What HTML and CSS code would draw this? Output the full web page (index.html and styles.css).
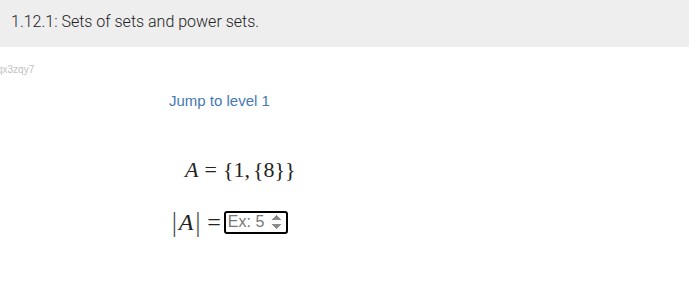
FILE: index.html
```html
<!DOCTYPE html>
<html>
<head>
<meta charset="utf-8">
<link rel="stylesheet" href="styles.css">
</head>
<body>
<header class="title">1.12.1: Sets of sets and power sets.</header>
<div class="activity-id">qx3zqy7</div>
<main class="content">
  <a class="jump" href="#">Jump to level 1</a>
  <div class="math math-set"><span class="var">A</span><span class="rel">=</span>{1,<span class="thin"></span>{8}}</div>
  <div class="math math-answer"><span class="bar">|</span><span class="var">A</span><span class="bar">|</span><span class="rel">=</span><input class="answer" type="number" placeholder="Ex: 5"></div>
</main>
</body>
</html>
```
FILE: styles.css
```css
body {
  margin: 0;
  background: #fff;
  font-family: "Liberation Sans", Arial, sans-serif;
}
.title {
  height: 47px;
  box-sizing: border-box;
  padding: 12px 0 0 11px;
  background: #eeeeee;
  font-family: Roboto, "Liberation Sans", sans-serif;
  font-weight: 300;
  font-size: 16px;
  line-height: 20px;
  color: #222;
}
.activity-id {
  margin: 17px 0 0 -3px;
  font-size: 10px;
  line-height: 12px;
  color: #c2c2c2;
}
.content {
  padding-left: 169px;
}
.jump {
  display: block;
  margin-top: 16px;
  font-size: 15px;
  line-height: 17px;
  color: #4579b3;
  text-decoration: none;
}
.math {
  font-family: "Liberation Serif", "Times New Roman", serif;
  font-size: 22px;
  color: #222;
  display: flex;
  align-items: center;
}
.math-set {
  margin-top: 46px;
  padding-left: 16px;
  height: 30px;
}
.math-answer {
  margin-top: 22px;
  padding-left: 3px;
  height: 30px;
}
.var { font-style: italic; }
.rel { margin: 0 6px 0 6px; }
.thin { display: inline-block; width: 3px; }
.bar { display: inline-block; transform: scaleY(1.2); color: #444; font-size: 24px; }
.bar + .var { margin: 0 2px; font-size: 24px; }
.math-answer .rel { margin: 0 3px 0 7px; font-size: 24px; }
.answer {
  width: 64px;
  height: 23px;
  box-sizing: border-box;
  border: 2px solid #000;
  border-radius: 3px;
  padding: 0 2px;
  margin-left: 0;
  font-family: "Liberation Sans", Arial, sans-serif;
  font-size: 16px;
  outline: none;
}
.answer::placeholder { color: #777; }
.answer::-webkit-inner-spin-button { opacity: 1; }
```
